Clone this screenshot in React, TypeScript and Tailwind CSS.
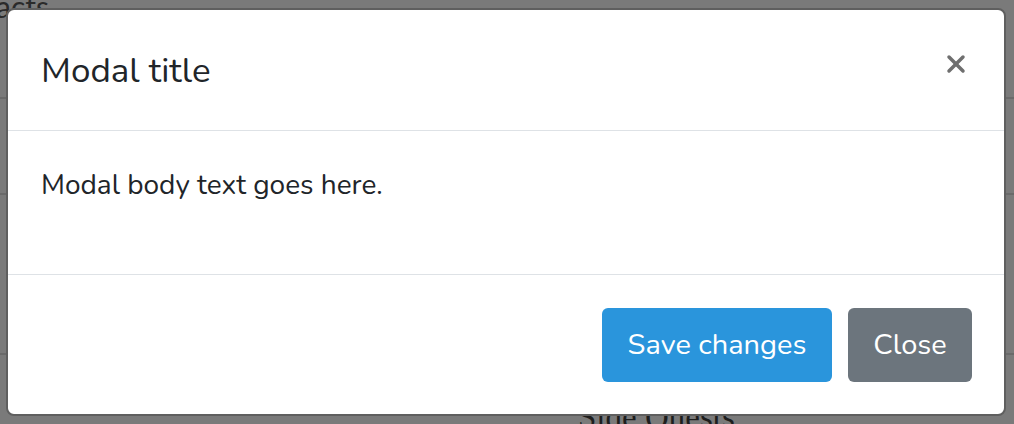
import { X } from "lucide-react";

const font = { fontFamily: "Nunito, Lato, 'Noto Sans', sans-serif" };

function BackgroundPage() {
  return (
    <div className="absolute inset-0 bg-[#7a7a7a] text-[#222]">
      <div className="h-[111px] border-b-2 border-[#6a6a6a]">
        <div className="-mt-[12px] -ml-[4px] text-[30px] leading-[36px] text-[#2a2a2a] font-['Lato',sans-serif]">acts</div>
      </div>
      <div className="h-[96px] border-b-2 border-[#6a6a6a]" />
      <div className="h-[160px] border-b-2 border-[#6a6a6a]" />
      <div className="flex h-[57px]">
        <div className="w-[474px] border-r-2 border-[#6a6a6a]" />
        <div className="w-[62px] border-r-2 border-[#6a6a6a]" />
        <div className="pl-[42px] pt-[46px] text-[33px] leading-[33px] text-[#1e1e1e] font-['Liberation_Serif',serif]">
          Side Quests
        </div>
      </div>
    </div>
  );
}

export default function App() {
  return (
    <div className="relative w-[1014px] h-[424px] overflow-hidden" style={font}>
      <BackgroundPage />

      <div
        className="absolute left-[6px] top-[8px] w-[1000px] h-[408px] flex flex-col rounded-[8px] border-2 border-[#5f5f5f] bg-white text-[#212529]"
        role="dialog"
        aria-modal="true"
        aria-label="Modal title"
      >
        <div className="h-[121px] flex items-start justify-between border-b border-[#dee2e6] pl-[33px] pr-[34px]">
          <h4 className="mt-[33px] text-[35px] leading-[56px] font-normal">Modal title</h4>
          <button type="button" aria-label="Close" className="mt-[40px] text-[#6f6f6f]">
            <X size={28} strokeWidth={3} />
          </button>
        </div>

        <div className="h-[144px] border-b border-[#dee2e6] pl-[33px] pt-[34px]">
          <p className="text-[28px] leading-[40px]">Modal body text goes here.</p>
        </div>

        <div className="flex-1 flex items-center justify-end gap-[16px] pr-[32px]">
          <button
            type="button"
            className="w-[230px] h-[74px] rounded-[6px] bg-[#2a95dc] text-white text-[29px] leading-none"
          >
            Save changes
          </button>
          <button
            type="button"
            className="w-[124px] h-[74px] rounded-[6px] bg-[#6c757d] text-white text-[29px] leading-none"
          >
            Close
          </button>
        </div>
      </div>
    </div>
  );
}
